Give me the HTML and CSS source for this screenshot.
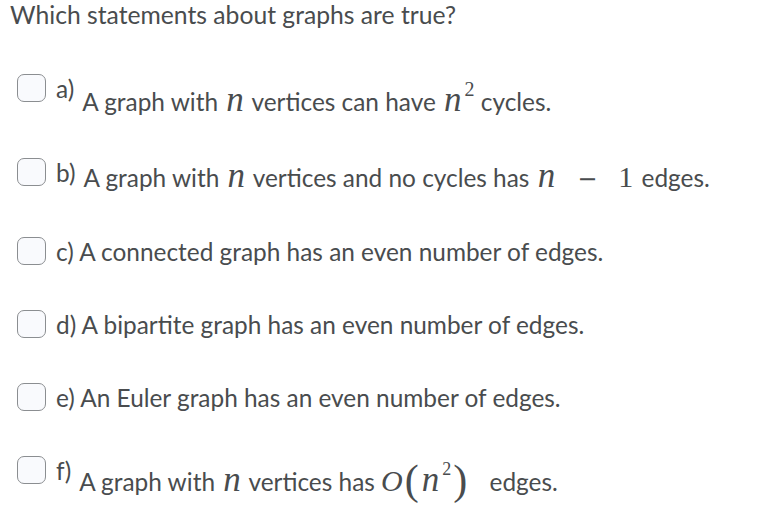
FILE: index.html
```html
<!DOCTYPE html>
<html>
<head>
<meta charset="utf-8">
<link rel="stylesheet" href="styles.css">
</head>
<body>
<div class="question">
  <div class="title">Which statements about graphs are true?</div>
  <div class="options">
    <div class="opt opt-a">
      <span class="box"></span>
      <span class="lbl">a)</span>
      <span class="txt">A graph with <span class="mi">n</span> vertices can have <span class="mi">n</span><sup class="sup">2</sup> cycles.</span>
    </div>
    <div class="opt opt-b">
      <span class="box"></span>
      <span class="lbl">b)</span>
      <span class="txt">A graph with <span class="mi">n</span> vertices and no cycles has <span class="mi">n</span><span class="mo">−</span><span class="mn">1</span> edges.</span>
    </div>
    <div class="opt">
      <span class="box"></span>
      <span class="txt">c) A connected graph has an even number of edges.</span>
    </div>
    <div class="opt">
      <span class="box"></span>
      <span class="txt">d) A bipartite graph has an even number of edges.</span>
    </div>
    <div class="opt">
      <span class="box"></span>
      <span class="txt">e) An Euler graph has an even number of edges.</span>
    </div>
    <div class="opt opt-f">
      <span class="box"></span>
      <span class="lbl">f)</span>
      <span class="txt">A graph with <span class="mi">n</span> vertices has <span class="mbig">O</span><span class="paren">(</span><span class="mi">n</span><sup class="sup sup-f">2</sup><span class="paren paren-close">)</span> edges.</span>
    </div>
  </div>
</div>
</body>
</html>
```
FILE: styles.css
```css
html, body {
  margin: 0;
  padding: 0;
  background: #ffffff;
}
body {
  font-family: Lato, "Open Sans", sans-serif;
  color: #494c4e;
  font-size: 24.4px;
}
.question {
  width: 762px;
  height: 517px;
  overflow: hidden;
}
.title {
  padding: 0 10px;
  font-size: 24.7px;
  line-height: 30px;
}
.options {
  padding-left: 17px;
  margin-top: 44px;
  display: flex;
  flex-direction: column;
}
.opt {
  display: flex;
  align-items: flex-start;
  height: 73px;
  flex: none;
}
.opt-a { height: 84px; }
.opt-b { height: 79px; }
.box {
  flex: none;
  box-sizing: border-box;
  width: 29px;
  height: 28px;
  border: 1px solid #8b8e91;
  border-radius: 7px;
  background: #f9fafd;
  margin-right: 10px;
}
.lbl {
  line-height: 30px;
  margin-right: 8px;
}
.txt {
  line-height: 30px;
  white-space: nowrap;
}
.opt-a .txt { padding-top: 13px; }
.opt-b .txt { padding-top: 5px; }
.opt-f .txt { padding-top: 11px; }
.mi {
  font-family: "Liberation Serif", serif;
  font-style: italic;
  font-size: 35px;
  line-height: 0;
  padding: 0 2px;
}
.mn {
  font-family: "Liberation Serif", serif;
  font-size: 30px;
  line-height: 0;
  margin-right: 2px;
}
.mo {
  font-family: "DejaVu Serif", serif;
  font-size: 24px;
  line-height: 0;
  padding: 0 21px 0 20px;
}
.mbig {
  font-family: "Liberation Serif", serif;
  font-style: italic;
  font-size: 30px;
  line-height: 0;
  margin-right: 2px;
}
.paren {
  font-family: "Liberation Serif", serif;
  font-size: 42px;
  line-height: 0;
  vertical-align: -3px;
  margin-right: 1px;
}
.paren-close {
  margin-left: 2px;
  margin-right: 16px;
}
.sup {
  font-family: "Liberation Serif", serif;
  font-size: 20px;
  line-height: 0;
  vertical-align: 15px;
  margin-left: 1px;
}
.sup-f {
  font-size: 18px;
  vertical-align: 16px;
  margin-left: 1px;
}
```
